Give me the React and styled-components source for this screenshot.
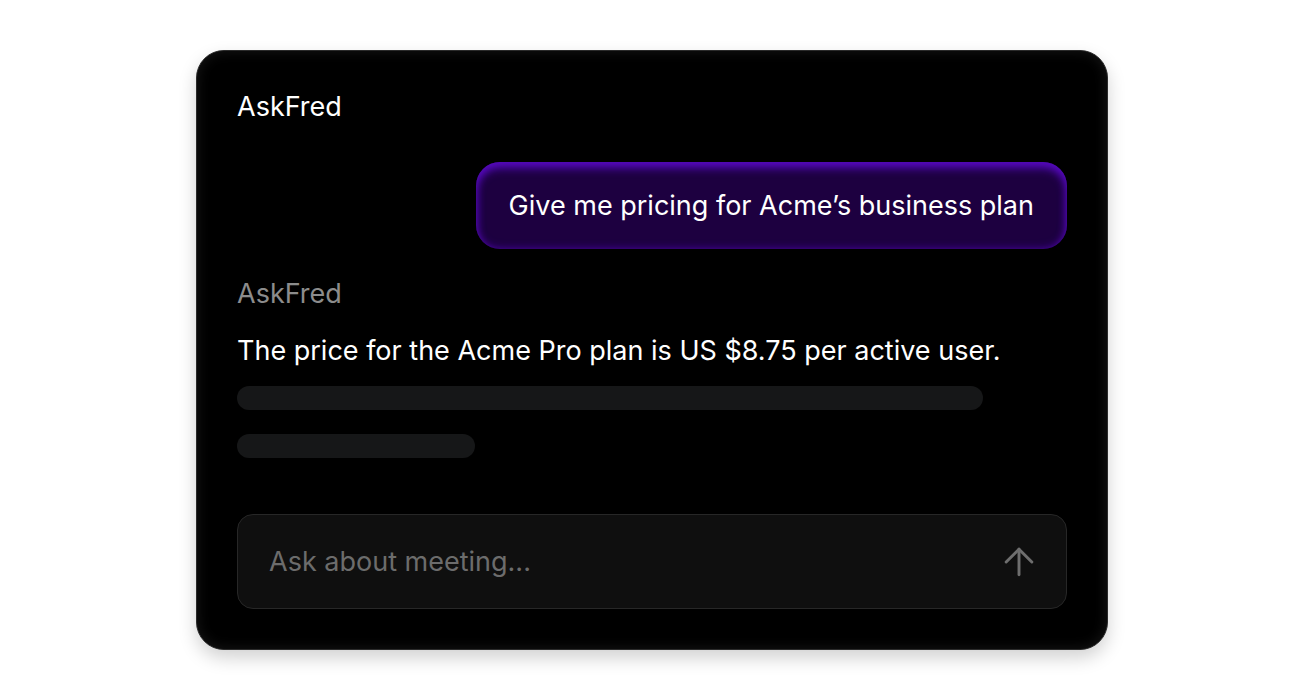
import styled, { createGlobalStyle } from "styled-components";
import { ArrowUp } from "lucide-react";

const GlobalStyle = createGlobalStyle`
  body {
    margin: 0;
    background: #ffffff;
    font-family: Inter, "Noto Sans", sans-serif;
  }
`;

export default function App() {
  return (
    <>
      <GlobalStyle />
      <Page>
        <ChatCard>
          <Title>AskFred</Title>

          <UserRow>
            <UserBubble>Give me pricing for Acme’s business plan</UserBubble>
          </UserRow>

          <BotName>AskFred</BotName>
          <BotText>The price for the Acme Pro plan is US $8.75 per active user.</BotText>

          <Skeleton $width="746px" />
          <Skeleton $width="238px" $gap="24px" />

          <InputBox>
            <Placeholder>Ask about meeting...</Placeholder>
            <SendButton aria-label="Send">
              <ArrowUp size={44} strokeWidth={1.6} />
            </SendButton>
          </InputBox>
        </ChatCard>
      </Page>
    </>
  );
}

const Page = styled.div`
  display: flex;
  justify-content: center;
  padding-top: 50px;
  height: 700px;
  box-sizing: border-box;
`;

const ChatCard = styled.div`
  width: 912px;
  height: 600px;
  box-sizing: border-box;
  padding: 40px;
  display: flex;
  flex-direction: column;
  background: #000;
  border-radius: 28px;
  border: 1px solid #2b2b2b;
  box-shadow:
    inset 0 0 14px rgba(255, 255, 255, 0.09),
    0 8px 18px rgba(0, 0, 0, 0.18);
`;

const Title = styled.div`
  color: #fff;
  font-size: 27px;
  line-height: 32px;
  font-weight: 400;
`;

const UserRow = styled.div`
  display: flex;
  justify-content: flex-end;
  margin-top: 39px;
`;

const UserBubble = styled.div`
  padding: 0 33px;
  height: 87px;
  display: flex;
  align-items: center;
  border-radius: 24px;
  background: #1d0040;
  color: #fff;
  font-size: 27px;
  box-shadow:
    inset 0 6px 10px rgba(90, 10, 200, 0.9),
    inset 0 0 9px rgba(90, 10, 200, 0.65);
`;

const BotName = styled.div`
  margin-top: 29px;
  color: #8c8c8c;
  font-size: 27px;
  line-height: 32px;
  font-weight: 400;
`;

const BotText = styled.div`
  margin-top: 23px;
  color: #fff;
  font-size: 27px;
  line-height: 36px;
`;

const Skeleton = styled.div`
  width: ${(p) => p.$width};
  height: 24px;
  margin-top: ${(p) => p.$gap || "17px"};
  border-radius: 12px;
  background: #161718;
`;

const InputBox = styled.div`
  margin-top: 56px;
  height: 95px;
  box-sizing: border-box;
  display: flex;
  align-items: center;
  justify-content: space-between;
  padding: 0 25px 0 31px;
  background: #0f0f0f;
  border: 1px solid #272727;
  border-radius: 16px;
`;

const Placeholder = styled.span`
  color: #6c6c6c;
  font-size: 27px;
`;

const SendButton = styled.button`
  background: none;
  border: none;
  padding: 0;
  color: #6e6e6e;
  display: flex;
`;
